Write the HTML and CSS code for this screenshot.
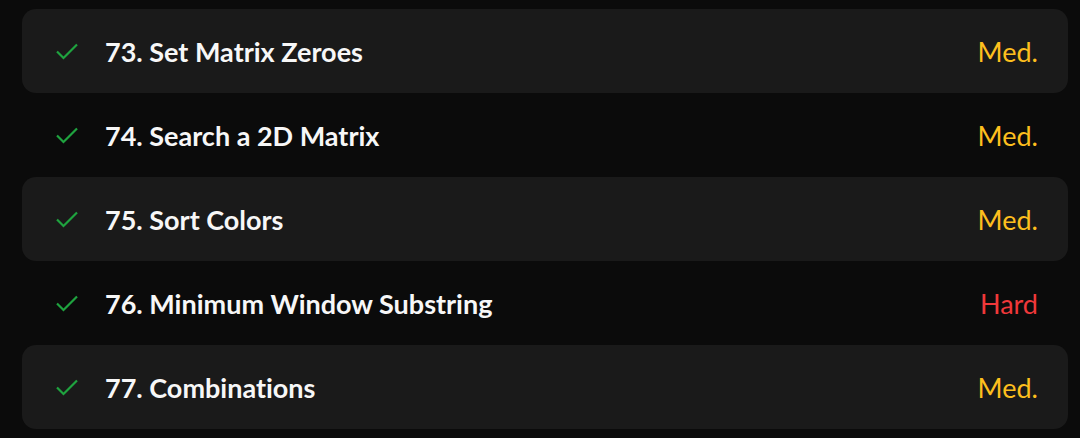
FILE: index.html
```html
<!DOCTYPE html>
<html lang="en">
<head>
  <meta charset="UTF-8" />
  <title>Problem List</title>
  <link rel="stylesheet" href="styles.css">
</head>
<body>
  <div class="list">
    <div class="row card">
      <svg class="check" viewBox="0 0 24 18"><path d="M2 9.5l6.5 6.5L22 2.5" /></svg>
      <span class="title">73. Set Matrix Zeroes</span>
      <span class="diff med">Med.</span>
    </div>
    <div class="row">
      <svg class="check" viewBox="0 0 24 18"><path d="M2 9.5l6.5 6.5L22 2.5" /></svg>
      <span class="title">74. Search a 2D Matrix</span>
      <span class="diff med">Med.</span>
    </div>
    <div class="row card">
      <svg class="check" viewBox="0 0 24 18"><path d="M2 9.5l6.5 6.5L22 2.5" /></svg>
      <span class="title">75. Sort Colors</span>
      <span class="diff med">Med.</span>
    </div>
    <div class="row">
      <svg class="check" viewBox="0 0 24 18"><path d="M2 9.5l6.5 6.5L22 2.5" /></svg>
      <span class="title">76. Minimum Window Substring</span>
      <span class="diff hard">Hard</span>
    </div>
    <div class="row card">
      <svg class="check" viewBox="0 0 24 18"><path d="M2 9.5l6.5 6.5L22 2.5" /></svg>
      <span class="title">77. Combinations</span>
      <span class="diff med">Med.</span>
    </div>
  </div>
</body>
</html>
```

FILE: styles.css
```css
body {
  margin: 0;
  background: #0b0b0b;
  font-family: Lato, "Open Sans", sans-serif;
  font-variant-ligatures: none;
  color: #f7f7f7;
}

.list {
  display: flex;
  flex-direction: column;
  padding: 9px 12px 0 22px;
}

.row {
  display: flex;
  align-items: center;
  height: 84px;
  padding: 0 30px 0 33px;
  border-radius: 14px;
}

.card {
  background: #1a1a1a;
}

.check {
  width: 24px;
  height: 18px;
  flex-shrink: 0;
}

.check path {
  fill: none;
  stroke: #1fa33f;
  stroke-width: 2.2;
}

.title {
  margin-left: 26px;
  font-size: 27px;
  font-weight: 700;
  flex: 1;
}

.diff {
  font-size: 27px;
}

.med {
  color: #fdbf1e;
}

.hard {
  color: #f0383a;
}
```
